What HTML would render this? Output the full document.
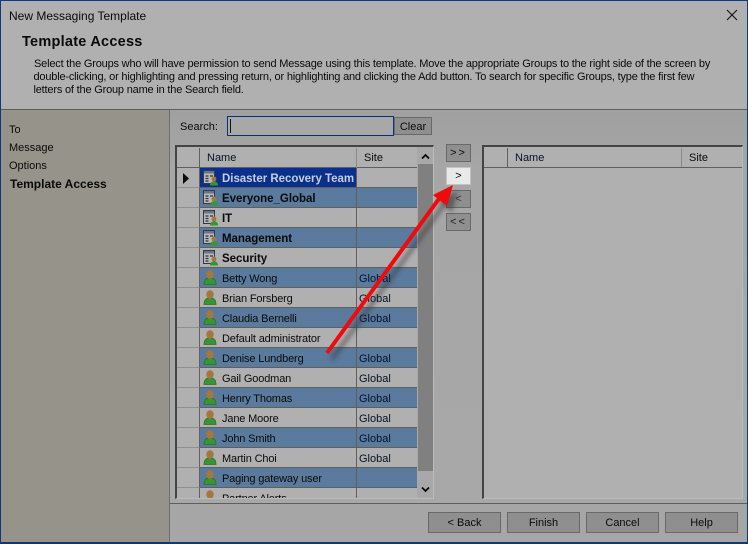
<!DOCTYPE html>
<html><head><meta charset="utf-8"><style>
html,body{margin:0;padding:0;width:748px;height:544px;overflow:hidden;background:#b0b0b0}
*{box-sizing:border-box}
body{font-family:"Liberation Sans",sans-serif;font-size:11px;color:#0a0a0a;position:relative}
.a{position:absolute;white-space:nowrap}
.btn{position:absolute;background:#8f8f8f;border:1px solid #696969;text-align:center;color:#0a0a0a}
.row{position:absolute;left:200px;width:217px;height:20px;border-bottom:1px solid #5f5f5f}
.row .n{position:absolute;left:0;top:0;width:157px;height:19px;border-right:1px solid #5f5f5f;line-height:22px;padding-left:22px;white-space:nowrap;letter-spacing:-.15px}
.row .s{position:absolute;left:159px;top:0;line-height:22px;color:#06122a}
.row svg{position:absolute;left:2px;top:1px}
.row.b{background:#5a7a9e}
.row b{font-size:11.5px;letter-spacing:-.03px}
.rh{position:absolute;left:177px;width:23px;height:20px;border-bottom:1px solid #8f8f8f;border-right:1px solid #5f5f5f;background:#b0b0b0}
.d{left:33.5px;line-height:13px;font-size:11px;letter-spacing:-.19px}
</style></head><body>
<svg width="0" height="0" style="position:absolute"><defs>
<g id="p"><path d="M2 15.5C2 11.5 3.5 9.8 6 9.2L10 9.2C12.5 9.8 14 11.5 14 15.5Z" fill="#36962f" stroke="#2a702a" stroke-width=".8"/><ellipse cx="8" cy="5.5" rx="3.7" ry="4.4" fill="#a5763e"/></g>
<g id="g"><rect x="1.5" y="1.5" width="11" height="13" fill="#b8b8b8" stroke="#2f3a50"/><rect x="2" y="2" width="10" height="2.5" fill="#6a7488"/><path d="M3.5 7h3M3.5 9.5h3M3.5 12h3M8 7h3" stroke="#333" stroke-width="1.2"/><circle cx="12" cy="10" r="2.4" fill="#a5763e"/><path d="M8 16.5C8 13.5 10 12.3 12 12.3C14 12.3 16 13.5 16 16.5Z" fill="#36962f"/></g>
</defs></svg>

<div class="a" style="left:0;top:0;width:748px;height:1px;background:#0a3a8c"></div>
<div class="a" style="left:0;top:0;width:1px;height:544px;background:#0a3a7c"></div>
<div class="a" style="left:747px;top:0;width:1px;height:544px;background:#0a3a7c"></div>
<div class="a" style="left:0;top:542px;width:748px;height:2px;background:#0a3a7c"></div>

<div class="a" style="left:9px;top:8px;line-height:16px;font-size:12px">New Messaging Template</div>
<svg class="a" style="left:726px;top:9px" width="12" height="12"><path d="M1 1L11 11M11 1L1 11" stroke="#111" stroke-width="1.1"/></svg>
<div class="a" style="left:22px;top:34px;font-size:14.5px;font-weight:bold;line-height:16px;letter-spacing:.25px">Template Access</div>
<div class="a d" style="top:58px;left:34px">Select the Groups who will have permission to send Message using this template. Move the appropriate Groups to the right side of the screen by</div>
<div class="a d" style="top:71px">double-clicking, or highlighting and pressing return, or highlighting and clicking the Add button. To search for specific Groups, type the first few</div>
<div class="a d" style="top:84px">letters of the Group name in the Search field.</div>

<div class="a" style="left:1px;top:109px;width:746px;height:1px;background:#5e5e5e"></div>
<div class="a" style="left:1px;top:110px;width:168px;height:432px;background:#96938b"></div>
<div class="a" style="left:169px;top:110px;width:1px;height:432px;background:#6e6e6e"></div>
<div class="a" style="left:170px;top:110px;width:577px;height:393px;background:linear-gradient(#a0a0a0,#a6a6a6 60px,#a8a8a8)"></div>
<div class="a" style="left:170px;top:503px;width:577px;height:1px;background:#5e5e5e"></div>
<div class="a" style="left:170px;top:504px;width:577px;height:38px;background:#a6a6a6"></div>

<div class="a" style="left:9px;top:122px;line-height:16px">To</div>
<div class="a" style="left:9px;top:140px;line-height:16px">Message</div>
<div class="a" style="left:9px;top:158px;line-height:16px">Options</div>
<div class="a" style="left:10px;top:176px;line-height:16px;font-weight:bold;font-size:12px">Template Access</div>

<div class="a" style="left:180px;top:119px;line-height:16px">Search:</div>
<div class="a" style="left:227px;top:116px;width:167px;height:20px;border:1px solid #0a2f80;background:#a8a8a8"></div>
<div class="a" style="left:230px;top:119px;width:1px;height:14px;background:#111"></div>
<div class="btn" style="left:394px;top:117px;width:38px;height:18px;line-height:18px">Clear</div>

<!-- left grid -->
<div class="a" style="left:175px;top:145px;width:259px;height:354px;background:#b0b0b0;border-top:2px solid #444;border-left:2px solid #444;border-right:1px solid #bcbcbc;border-bottom:1px solid #bcbcbc;overflow:hidden"></div>
<div class="a" style="left:177px;top:147px;width:240px;height:351px;overflow:hidden">
<div style="position:absolute;left:-177px;top:-147px;width:748px;height:544px">
<div class="a" style="left:177px;top:148px;width:240px;height:20px;background:#b0b0b0;border-bottom:1px solid #5f5f5f"></div>
<div class="a" style="left:199px;top:148px;width:1px;height:350px;background:#5f5f5f"></div>
<div class="a" style="left:356px;top:148px;width:1px;height:20px;background:#8a8a8a"></div>
<div class="a" style="left:207px;top:150px;line-height:16px;color:#06122a">Name</div>
<div class="a" style="left:364px;top:150px;line-height:16px">Site</div>

<div class="rh" style="top:168px"></div><div class="rh" style="top:188px"></div><div class="rh" style="top:208px"></div><div class="rh" style="top:228px"></div><div class="rh" style="top:248px"></div><div class="rh" style="top:268px"></div><div class="rh" style="top:288px"></div><div class="rh" style="top:308px"></div><div class="rh" style="top:328px"></div><div class="rh" style="top:348px"></div><div class="rh" style="top:368px"></div><div class="rh" style="top:388px"></div><div class="rh" style="top:408px"></div><div class="rh" style="top:428px"></div><div class="rh" style="top:448px"></div><div class="rh" style="top:468px"></div><div class="rh" style="top:488px"></div>
<svg class="a" style="left:183px;top:173px" width="7" height="11"><path d="M0 0L6 5.5L0 11Z" fill="#0a0a0a"/></svg>

<div class="row" style="top:168px"><div class="n" style="background:#0a2f8c;color:#c4cede"><b>Disaster Recovery Team</b></div><svg width="17" height="18"><use href="#g"/></svg></div>
<div class="row b" style="top:188px"><div class="n"><b>Everyone_Global</b></div><svg width="17" height="18"><use href="#g"/></svg></div>
<div class="row" style="top:208px"><div class="n"><b>IT</b></div><svg width="17" height="18"><use href="#g"/></svg></div>
<div class="row b" style="top:228px"><div class="n"><b>Management</b></div><svg width="17" height="18"><use href="#g"/></svg></div>
<div class="row" style="top:248px"><div class="n"><b>Security</b></div><svg width="17" height="18"><use href="#g"/></svg></div>
<div class="row b" style="top:268px"><div class="n">Betty Wong</div><div class="s">Global</div><svg width="17" height="18"><use href="#p"/></svg></div>
<div class="row" style="top:288px"><div class="n">Brian Forsberg</div><div class="s">Global</div><svg width="17" height="18"><use href="#p"/></svg></div>
<div class="row b" style="top:308px"><div class="n">Claudia Bernelli</div><div class="s">Global</div><svg width="17" height="18"><use href="#p"/></svg></div>
<div class="row" style="top:328px"><div class="n">Default administrator</div><svg width="17" height="18"><use href="#p"/></svg></div>
<div class="row b" style="top:348px"><div class="n">Denise Lundberg</div><div class="s">Global</div><svg width="17" height="18"><use href="#p"/></svg></div>
<div class="row" style="top:368px"><div class="n">Gail Goodman</div><div class="s">Global</div><svg width="17" height="18"><use href="#p"/></svg></div>
<div class="row b" style="top:388px"><div class="n">Henry Thomas</div><div class="s">Global</div><svg width="17" height="18"><use href="#p"/></svg></div>
<div class="row" style="top:408px"><div class="n">Jane Moore</div><div class="s">Global</div><svg width="17" height="18"><use href="#p"/></svg></div>
<div class="row b" style="top:428px"><div class="n">John Smith</div><div class="s">Global</div><svg width="17" height="18"><use href="#p"/></svg></div>
<div class="row" style="top:448px"><div class="n">Martin Choi</div><div class="s">Global</div><svg width="17" height="18"><use href="#p"/></svg></div>
<div class="row b" style="top:468px"><div class="n">Paging gateway user</div><svg width="17" height="18"><use href="#p"/></svg></div>
<div class="row" style="top:488px"><div class="n">Partner Alerts</div><svg width="17" height="18"><use href="#p"/></svg></div>
</div></div>

<!-- scrollbar -->
<div class="a" style="left:417px;top:147px;width:16px;height:351px;background:#a8a8a8"></div>
<div class="a" style="left:418px;top:164px;width:15px;height:307px;background:#808080"></div>
<svg class="a" style="left:421px;top:153px" width="9" height="7"><path d="M1 5.5L4.5 2L8 5.5" fill="none" stroke="#0a0a0a" stroke-width="1.8"/></svg>
<svg class="a" style="left:421px;top:486px" width="9" height="7"><path d="M1 1.5L4.5 5L8 1.5" fill="none" stroke="#0a0a0a" stroke-width="1.8"/></svg>

<!-- move buttons -->
<div class="btn" style="left:446px;top:144px;width:25px;height:18px;line-height:16px;letter-spacing:2px">&gt;&gt;</div>
<div class="btn" style="left:446px;top:167px;width:25px;height:18px;line-height:16px;background:#e9e9e9;border:1px solid #c4c4c4">&gt;</div>
<div class="btn" style="left:446px;top:190px;width:25px;height:18px;line-height:16px;color:#333">&lt;</div>
<div class="btn" style="left:446px;top:213px;width:25px;height:18px;line-height:16px;letter-spacing:2px;color:#222">&lt;&lt;</div>

<!-- right grid -->
<div class="a" style="left:482px;top:145px;width:261px;height:354px;background:#b0b0b0;border-top:2px solid #444;border-left:2px solid #444;border-right:1px solid #bcbcbc;border-bottom:1px solid #bcbcbc"></div>
<div class="a" style="left:484px;top:167px;width:258px;height:1px;background:#5f5f5f"></div>
<div class="a" style="left:507px;top:148px;width:1px;height:19px;background:#5f5f5f"></div>
<div class="a" style="left:681px;top:148px;width:1px;height:19px;background:#8a8a8a"></div>
<div class="a" style="left:515px;top:150px;line-height:16px;color:#06122a">Name</div>
<div class="a" style="left:689px;top:150px;line-height:16px">Site</div>

<!-- bottom buttons -->
<div class="btn" style="left:428px;top:512px;width:73px;height:21px;line-height:20px">&lt; Back</div>
<div class="btn" style="left:507px;top:512px;width:73px;height:21px;line-height:20px">Finish</div>
<div class="btn" style="left:586px;top:512px;width:73px;height:21px;line-height:20px">Cancel</div>
<div class="btn" style="left:665px;top:512px;width:73px;height:21px;line-height:20px">Help</div>

<!-- arrow -->
<svg class="a" style="left:0;top:0" width="748" height="544">
<defs><filter id="bl" x="-20%" y="-20%" width="140%" height="140%"><feGaussianBlur stdDeviation="2.5"/></filter></defs>
<g transform="translate(5,6)" filter="url(#bl)" opacity=".55"><path d="M327 353L441 196" stroke="#333" stroke-width="4" fill="none"/><path d="M453 185L433 195L447 206Z" fill="#333"/></g>
<path d="M327 353L441 196" stroke="#f00a0a" stroke-width="4" fill="none"/>
<path d="M453 185L433 195L447 206Z" fill="#f00a0a"/>
</svg>
</body></html>
